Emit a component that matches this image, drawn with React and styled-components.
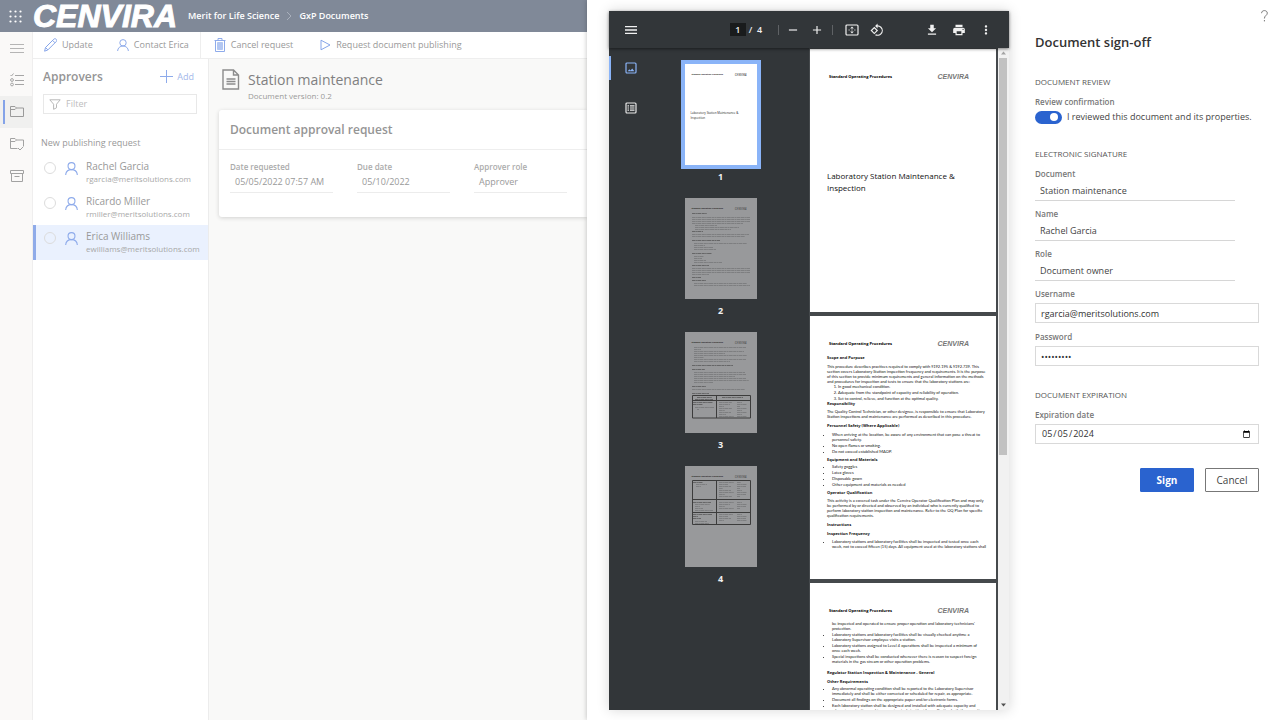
import React, { useState } from "react";
import styled, { createGlobalStyle } from "styled-components";
import {
  MdAdd,
  MdFileDownload,
  MdMenu,
  MdMoreVert,
  MdPrint,
  MdRemove,
  MdRotate90DegreesCcw,
} from "react-icons/md";

const approvers = [
  { id: "rgarcia", name: "Rachel Garcia", email: "rgarcia@meritsolutions.com" },
  { id: "rmiller", name: "Ricardo Miller", email: "rmiller@meritsolutions.com" },
  { id: "ewilliams", name: "Erica Williams", email: "ewilliams@meritsolutions.com", selected: true },
];

const scope = [
  "This procedure describes practices required to comply with §192.195 & §192.739. This",
  "section covers Laboratory Station inspection frequency and requirements. It is the purpose",
  "of this section to provide minimum requirements and general information on the methods",
  "and procedures for inspection and tests to ensure that the laboratory stations are:",
];

const responsibility = [
  "The Quality Control Technician, or other designee, is responsible to ensure that Laboratory",
  "Station inspections and maintenance are performed as described in this procedure.",
];

const qualification = [
  "This activity is a covered task under the Cenvira Operator Qualification Plan and may only",
  "be performed by or directed and observed by an individual who is currently qualified to",
  "perform laboratory station inspection and maintenance. Refer to the OQ Plan for specific",
  "qualification requirements.",
];

// [y, x1, x2, strong] strokes of the small page previews
const previewTwo = [
  [16, 7, 22, 1], [20, 7, 65], [22, 7, 65], [24, 7, 65], [26, 7, 58],
  [28, 10, 32], [30, 10, 54], [32, 10, 46], [34, 7, 18, 1], [37, 7, 64], [39, 7, 60],
  [43, 7, 35, 1], [46, 9, 62], [48, 9, 20], [50, 9, 28], [52, 9, 31],
  [56, 7, 27, 1], [59, 9, 19], [61, 9, 17], [63, 9, 21], [65, 9, 37],
  [68, 7, 24, 1], [71, 7, 65], [73, 7, 65], [75, 7, 65], [77, 7, 24],
  [80, 7, 16, 1], [83, 7, 21, 1], [86, 9, 62], [88, 9, 65],
];
const previewThree = [
  [16, 9, 61], [18, 9, 16], [20, 9, 59], [22, 9, 40], [24, 9, 62], [26, 9, 19],
  [28, 9, 61], [30, 9, 45], [34, 7, 48, 1], [38, 7, 20, 1], [41, 9, 60], [43, 9, 61],
  [45, 9, 50], [47, 9, 61], [49, 9, 64], [51, 9, 28], [55, 7, 21, 1], [58, 7, 60], [62, 7, 24, 1],
  [66, 12, 27, 1], [68, 10, 28, 1], [66, 37, 58, 1],
  [71, 8, 28, 1], [73, 8, 18, 1], [76, 10, 29], [78, 12, 14],
  [71, 34, 47], [73, 34, 45], [75, 34, 39], [77, 34, 47], [79, 34, 40], [81, 34, 46], [83, 34, 41], [85, 34, 49],
  [71, 52, 57], [73, 52, 62], [75, 52, 55], [77, 52, 62], [79, 52, 57], [81, 52, 62], [83, 52, 57], [85, 52, 62],
];
const previewFour = [
  [17, 8, 18, 1], [19, 11, 22], [21, 11, 16], [37, 8, 26, 1], [39, 10, 25], [41, 10, 15], [43, 10, 18], [45, 10, 28],
  [49, 8, 27, 1], [51, 8, 13, 1], [53, 8, 16, 1], [56, 10, 22], [58, 10, 24],
  [17, 34, 49], [19, 34, 43], [21, 34, 46], [23, 34, 38], [25, 34, 46], [27, 34, 49], [29, 34, 40], [31, 34, 47],
  [37, 34, 49], [39, 34, 45], [41, 34, 40], [43, 34, 49], [49, 34, 48], [51, 34, 43], [53, 34, 46], [55, 34, 39],
  [17, 52, 56], [19, 52, 62], [21, 52, 61], [23, 52, 55], [25, 52, 57], [27, 52, 62], [29, 52, 61], [31, 52, 55],
  [37, 52, 57], [39, 52, 62], [41, 52, 61], [43, 52, 55], [49, 52, 57], [51, 52, 62], [53, 52, 61], [55, 52, 62],
];

const thumbnails = [
  { page: 2, lines: previewTwo },
  { page: 3, lines: previewThree, table: "M7.5 64.5h58v22.5h-58zM31.5 64.5v22.5M7.5 69.5h58" },
  { page: 4, lines: previewFour, table: "M7.5 15.5h58v44h-58zM31.5 15.5v44M7.5 34.5h58M7.5 47.5h58" },
];

export default function App() {
  const [reviewed, setReviewed] = useState(true);

  return (
    <>
      <GlobalStyle />
      <Shell>
        <Workspace>
          <TopBar>
            <WaffleButton aria-label="Apps">
              <WaffleIcon />
            </WaffleButton>
            <Logo>CENVIRA</Logo>
            <Crumbs>
              <Crumb href="#life-science">Merit for Life Science</Crumb>
              <ChevronIcon />
              <Crumb href="#gxp">GxP Documents</Crumb>
            </Crumbs>
          </TopBar>
          <Body>
            <Rail>
              <RailButton aria-label="Menu">
                <BarsIcon />
              </RailButton>
              <RailButton aria-label="Tasks">
                <TasksIcon />
              </RailButton>
              <RailButton aria-label="Documents" $active>
                <FolderIcon />
              </RailButton>
              <RailButton aria-label="Reviewed">
                <FolderCheckIcon />
              </RailButton>
              <RailButton aria-label="Archive">
                <ArchiveIcon />
              </RailButton>
            </Rail>
            <Main>
              <Commands>
                <CommandGroup>
                  <Command>
                    <PencilIcon />
                    Update
                  </Command>
                  <Command>
                    <PersonIcon size={12} />
                    Contact Erica
                  </Command>
                </CommandGroup>
                <CommandGroup>
                  <Command>
                    <TrashIcon />
                    Cancel request
                  </Command>
                  <Command>
                    <PlayIcon />
                    Request document publishing
                  </Command>
                </CommandGroup>
              </Commands>
              <Columns>
                <Approvers>
                  <ApproversHead>
                    <PanelTitle>Approvers</PanelTitle>
                    <AddButton>
                      <PlusIcon />
                      Add
                    </AddButton>
                  </ApproversHead>
                  <Filter>
                    <FunnelIcon />
                    <FilterInput aria-label="Filter approvers" placeholder="Filter" />
                  </Filter>
                  <GroupLabel>New publishing request</GroupLabel>
                  <ApproverList>
                    {approvers.map((a) => (
                      <ApproverRow key={a.id} $selected={a.selected}>
                        <Radio type="radio" name="approver" value={a.id} />
                        <PersonIcon size={13} />
                        <ApproverText>
                          <ApproverName>{a.name}</ApproverName>
                          <ApproverEmail>{a.email}</ApproverEmail>
                        </ApproverText>
                      </ApproverRow>
                    ))}
                  </ApproverList>
                </Approvers>
                <Detail>
                  <DetailHead>
                    <DocumentIcon />
                    <div>
                      <DetailTitle>Station maintenance</DetailTitle>
                      <DetailVersion>Document version: 0.2</DetailVersion>
                    </div>
                  </DetailHead>
                  <Card>
                    <CardTitle>Document approval request</CardTitle>
                    <CardFields>
                      <CardField>
                        <CardLabel>Date requested</CardLabel>
                        <CardValue>05/05/2022 07:57 AM</CardValue>
                      </CardField>
                      <CardField>
                        <CardLabel>Due date</CardLabel>
                        <CardValue>05/10/2022</CardValue>
                      </CardField>
                      <CardField>
                        <CardLabel>Approver role</CardLabel>
                        <CardValue>Approver</CardValue>
                      </CardField>
                    </CardFields>
                  </Card>
                </Detail>
              </Columns>
            </Main>
          </Body>
        </Workspace>

        <SignOff>
          <Viewer>
            <ViewerBar>
              <ViewerButton aria-label="Toggle sidebar">
                <MdMenu size={16} />
              </ViewerButton>
              <ViewerTools>
                <PageInput aria-label="Page number" defaultValue="1" />
                <PageCount>/&nbsp; 4</PageCount>
                <ToolDivider />
                <ViewerButton aria-label="Zoom out">
                  <MdRemove size={14} />
                </ViewerButton>
                <ViewerButton aria-label="Zoom in">
                  <MdAdd size={14} />
                </ViewerButton>
                <ToolDivider />
                <ViewTools>
                  <ViewerButton aria-label="Fit to page">
                    <FitIcon />
                  </ViewerButton>
                  <ViewerButton aria-label="Rotate">
                    <MdRotate90DegreesCcw size={14} />
                  </ViewerButton>
                </ViewTools>
              </ViewerTools>
              <ViewerActions>
                <ViewerButton aria-label="Download">
                  <MdFileDownload size={14} />
                </ViewerButton>
                <ViewerButton aria-label="Print">
                  <MdPrint size={14} />
                </ViewerButton>
                <ViewerButton aria-label="More">
                  <MdMoreVert size={14} />
                </ViewerButton>
              </ViewerActions>
            </ViewerBar>
            <ViewerBody>
              <ViewerTabs>
                <ViewerTab aria-label="Thumbnails" $active>
                  <ImageIcon />
                </ViewerTab>
                <ViewerTab aria-label="Outline">
                  <OutlineIcon />
                </ViewerTab>
              </ViewerTabs>
              <Thumbs>
                <Thumb>
                  <ThumbPage $current>
                    <ThumbHeader />
                    <ThumbTitle>
                      Laboratory Station Maintenance &
                      <br />
                      Inspection
                    </ThumbTitle>
                  </ThumbPage>
                  <ThumbNumber>1</ThumbNumber>
                </Thumb>
                {thumbnails.map((t) => (
                  <Thumb key={t.page}>
                    <ThumbPage>
                      <ThumbHeader />
                      <Preview lines={t.lines} table={t.table} />
                    </ThumbPage>
                    <ThumbNumber>{t.page}</ThumbNumber>
                  </Thumb>
                ))}
              </Thumbs>
              <Pages>
                <Page>
                  <PageHeader />
                  <CoverTitle>
                    Laboratory Station Maintenance &
                    <br />
                    Inspection
                  </CoverTitle>
                </Page>
                <Page>
                  <PageHeader />
                  <DocHeading $top={9}>Scope and Purpose</DocHeading>
                  <Paragraph $top={4} lines={scope} />
                  <DocList as="ol" $top={0} $indent={11}>
                    <li>In good mechanical condition.</li>
                    <li>Adequate from the standpoint of capacity and reliability of operation.</li>
                    <li>Set to control, relieve, and function at the optimal quality.</li>
                  </DocList>
                  <DocHeading $top={0}>Responsibility</DocHeading>
                  <Paragraph $top={3} lines={responsibility} />
                  <DocHeading $top={4}>Personnel Safety (Where Applicable)</DocHeading>
                  <DocList $top={4}>
                    <li>
                      When arriving at the location, be aware of any environment that can pose a threat to
                      <br />
                      personnel safety.
                    </li>
                    <li>No open flames or smoking.</li>
                    <li>Do not exceed established MAOP.</li>
                  </DocList>
                  <DocHeading $top={3}>Equipment and Materials</DocHeading>
                  <DocList $top={2}>
                    <li>Safety goggles</li>
                    <li>Latex gloves</li>
                    <li>Disposable gown</li>
                    <li>Other equipment and materials as needed</li>
                  </DocList>
                  <DocHeading $top={3}>Operator Qualification</DocHeading>
                  <Paragraph $top={3} lines={qualification} />
                  <DocHeading $top={4}>Instructions</DocHeading>
                  <DocHeading $top={4} as="h4">
                    Inspection Frequency
                  </DocHeading>
                  <DocList $top={3}>
                    <li>
                      Laboratory stations and laboratory facilities shall be inspected and tested once each
                      <br />
                      week, not to exceed fifteen (15) days. All equipment used at the laboratory stations shall
                    </li>
                  </DocList>
                </Page>
                <Page>
                  <PageHeader />
                  <DocList $top={8}>
                    <Continued>
                      be inspected and operated to ensure proper operation and laboratory technicians'
                      <br />
                      protection.
                    </Continued>
                    <li>
                      Laboratory stations and laboratory facilities shall be visually checked anytime a
                      <br />
                      Laboratory Supervisor employee visits a station.
                    </li>
                    <li>
                      Laboratory stations assigned to Level 4 operations shall be inspected a minimum of
                      <br />
                      once each week.
                    </li>
                    <li>
                      Special inspections shall be conducted whenever there is reason to suspect foreign
                      <br />
                      materials in the gas stream or other operation problems.
                    </li>
                  </DocList>
                  <DocHeading $top={6}>Regulator Station Inspection & Maintenance - General</DocHeading>
                  <DocHeading $top={4} as="h4">
                    Other Requirements
                  </DocHeading>
                  <DocList $top={2}>
                    <li>
                      Any abnormal operating condition shall be reported to the Laboratory Supervisor
                      <br />
                      immediately and shall be either corrected or scheduled for repair, as appropriate.
                    </li>
                    <li>Document all findings on the appropriate paper and/or electronic forms.</li>
                    <li>
                      Each laboratory station shall be designed and installed with adequate capacity and
                      <br />
                      adequate protection, and to prevent a single incident from affecting both the operating
                    </li>
                  </DocList>
                </Page>
              </Pages>
              <ScrollTrack>
                <ScrollArrow viewBox="0 0 11 10">
                  <path d="M5.5 3.5l2.5 3h-5z" fill="#a3a3a3" />
                </ScrollArrow>
                <ScrollThumb />
                <ScrollArrow viewBox="0 0 11 10">
                  <path d="M3 3.5h5l-2.5 3z" fill="#505050" />
                </ScrollArrow>
              </ScrollTrack>
            </ViewerBody>
          </Viewer>

          <FormSide>
            <HelpRow>
              <HelpButton aria-label="Help">
                <HelpIcon />
              </HelpButton>
            </HelpRow>
            <Form onSubmit={(e) => e.preventDefault()}>
              <FormTitle>Document sign-off</FormTitle>
              <Section>
                <Legend>Document review</Legend>
                <Label htmlFor="reviewed">Review confirmation</Label>
                <ToggleRow>
                  <Toggle
                    id="reviewed"
                    type="checkbox"
                    role="switch"
                    checked={reviewed}
                    onChange={(e) => setReviewed(e.target.checked)}
                  />
                  <span>I reviewed this document and its properties.</span>
                </ToggleRow>
              </Section>
              <Section>
                <Legend>Electronic signature</Legend>
                <Label htmlFor="document">Document</Label>
                <ReadOnly id="document" readOnly value="Station maintenance" />
                <Label htmlFor="name">Name</Label>
                <ReadOnly id="name" readOnly value="Rachel Garcia" />
                <Label htmlFor="role">Role</Label>
                <ReadOnly id="role" readOnly value="Document owner" />
                <Label htmlFor="username">Username</Label>
                <Input id="username" defaultValue="rgarcia@meritsolutions.com" />
                <Label htmlFor="password">Password</Label>
                <Input id="password" type="password" defaultValue="signature" />
              </Section>
              <Section>
                <Legend>Document expiration</Legend>
                <Label htmlFor="expires">Expiration date</Label>
                <Input id="expires" type="date" defaultValue="2024-05-05" />
              </Section>
              <Buttons>
                <Button type="submit" $primary>
                  Sign
                </Button>
                <Button type="button">Cancel</Button>
              </Buttons>
            </Form>
          </FormSide>
        </SignOff>
      </Shell>
    </>
  );
}

function ThumbHeader() {
  return (
    <ThumbHead>
      <b>Standard Operating Procedures</b>
      <ThumbBrand>CENVIRA</ThumbBrand>
    </ThumbHead>
  );
}

function Preview({ lines, table }) {
  return (
    <PreviewSvg viewBox="0 14 72 76">
      {lines.map(([y, x1, x2, strong], i) => (
        <path
          key={i}
          d={`M${x1} ${y + 0.5}H${x2}`}
          stroke="#222"
          strokeDasharray="3 .4 1.5 .4 4 .5"
          opacity={strong ? 0.42 : 0.22}
        />
      ))}
      {table && <path d={table} fill="none" stroke="#3c3c3c" />}
    </PreviewSvg>
  );
}

function PageHeader() {
  return (
    <PageHead>
      <b>Standard Operating Procedures</b>
      <PageBrand>CENVIRA</PageBrand>
    </PageHead>
  );
}

function Paragraph({ lines, $top }) {
  return (
    <DocParagraph $top={$top}>
      {lines.map((line, i) => (
        <DocLine key={line} $last={i === lines.length - 1}>
          {line}
        </DocLine>
      ))}
    </DocParagraph>
  );
}

/* icons */

const WaffleIcon = () => (
  <svg width="13" height="13" viewBox="0 0 13 13" fill="#fff">
    {[1.5, 6.5, 11.5].map((y) => [1.5, 6.5, 11.5].map((x) => <circle key={x + "-" + y} cx={x} cy={y} r="1.1" />))}
  </svg>
);
const ChevronIcon = () => (
  <svg width="6" height="10" viewBox="0 0 6 10" fill="none" stroke="#a9b0bc">
    <path d="M1 1l4 4-4 4" />
  </svg>
);
const BarsIcon = () => (
  <svg width="14" height="14" viewBox="0 0 14 14" fill="none" stroke="#b5b5b5">
    <path d="M0 3.5h14M0 7.5h14M0 11.5h14" />
  </svg>
);
const TasksIcon = () => (
  <svg width="14" height="14" viewBox="0 0 14 14" fill="none" stroke="#a5a5a5">
    <path d="M5 2.5h9M5 7.5h9M5 11.5h9M.5 2l1 1L3.5 .5" />
    <circle cx="2" cy="7" r="1.4" />
    <circle cx="2" cy="11.5" r="1.4" />
  </svg>
);
const FolderIcon = () => (
  <svg width="14" height="14" viewBox="0 0 14 14" fill="none" stroke="#9a9a9a">
    <path d="M.5 11.5v-10h4.5l1.5 1.5h7v8.5zM.5 4.5h4.5l1.5-1.5" />
  </svg>
);
const FolderCheckIcon = () => (
  <svg width="14" height="14" viewBox="0 0 14 14" fill="none" stroke="#a2a2a2">
    <path d="M7.5 11.5h-7v-10h4.5l1.5 1.5h7v6M.5 4.5h4.5l1.5-1.5M8 11l2 2 3.5-3.5" />
  </svg>
);
const ArchiveIcon = () => (
  <svg width="14" height="14" viewBox="0 0 14 14" fill="none" stroke="#a2a2a2">
    <path d="M.5 1.5h13v3h-13zM1.5 4.5v8h11v-8M4.5 7.5h5" />
  </svg>
);
const PencilIcon = () => (
  <svg width="13" height="14" viewBox="0 0 13 14" fill="none" stroke="#86a5e9">
    <path d="M.6 13.2l.9-3.7 8.3-8.3c1.6-1.5 3.9.8 2.4 2.4l-8.3 8.3zM1.5 9.5l2.4 2.4M8.6 2.4l2.4 2.4" />
  </svg>
);
const PersonIcon = ({ size }) => (
  <svg width={size} height={size} viewBox="0 0 12 12" fill="none" stroke="#8eabeb">
    <circle cx="6" cy="3.8" r="3.2" />
    <path d="M.6 12c.2-3 2.4-5 5.4-5s5.2 2 5.4 5" />
  </svg>
);
const TrashIcon = () => (
  <svg width="12" height="14" viewBox="0 0 12 14" fill="none" stroke="#8eabeb">
    <path d="M.5 2.5h11M4 2.5v-2h4v2M1.5 2.5v11h9v-11" />
    <path d="M3.5 4.5h5v7h-5z" fill="#b3c7f2" stroke="#b3c7f2" />
  </svg>
);
const PlayIcon = () => (
  <svg width="11" height="12" viewBox="0 0 11 12" fill="none" stroke="#86a5e9">
    <path d="M1 1.2v9.600l9-4.800z" />
  </svg>
);
const PlusIcon = () => (
  <svg width="13" height="13" viewBox="0 0 13 13" fill="none" stroke="#8eabeb">
    <path d="M6.5 0v13M0 6.5h13" />
  </svg>
);
const FunnelIcon = () => (
  <svg width="12" height="11" viewBox="0 0 12 11" fill="none" stroke="#b8b8b8">
    <path d="M.8.8h10.4L7.5 5.2v3.6L4.6 10.3V5.2z" />
  </svg>
);
const DocumentIcon = () => (
  <svg width="18" height="21" viewBox="0 0 18 21" fill="none" stroke="#8c8c8c" strokeWidth="1.4">
    <path d="M1 1h10.5L16.5 6v14H1zM11.5 1v5h5M4.5 10h9M4.5 12.5h9M4.5 15h9" />
  </svg>
);
const FitIcon = () => (
  <svg width="14" height="14" viewBox="0 0 14 14" fill="none" stroke="#f1f1f1" strokeWidth="1.2">
    <rect x="1" y="2" width="12" height="10" rx="1" />
    <path
      d="M7 3.6l1.8 2H5.2zM7 10.4l1.8-2H5.2zM3.6 6.5h1v1h-1zM6.5 6.5h1v1h-1zM9.4 6.5h1v1h-1z"
      fill="#f1f1f1"
      stroke="none"
    />
  </svg>
);
const ImageIcon = () => (
  <svg width="12" height="12" viewBox="0 0 12 12" fill="none" stroke="#8ab4f8" strokeWidth="1.2">
    <rect x="1" y="1" width="10" height="10" rx="1" />
    <path d="M2.7 9.3l1.6-2 1.2 1.3L7.2 6.5l2.2 2.8z" fill="#8ab4f8" stroke="none" />
  </svg>
);
const OutlineIcon = () => (
  <svg width="12" height="12" viewBox="0 0 12 12" fill="none" stroke="#e8e8e8" strokeWidth="1.2">
    <rect x="1" y="1" width="10" height="10" rx="1" />
    <path d="M2.5 3.8h1.5M5 3.8h4.5M2.5 6h1.5M5 6h4.5M2.5 8.2h1.5M5 8.2h4.5" />
  </svg>
);
const HelpIcon = () => (
  <svg width="7" height="12" viewBox="0 0 7 12" fill="none" stroke="#777">
    <path d="M.6 3.2C.6 1.5 1.8.6 3.4.6s2.9 1 2.9 2.5c0 2.3-2.9 2.5-2.9 5.4M3.4 10v1.4" />
  </svg>
);

const GlobalStyle = createGlobalStyle`
  * {
    box-sizing: border-box;
  }
  body {
    margin: 0;
    font-family: "Open Sans", sans-serif;
    font-size: 9px;
    line-height: 14px;
    font-weight: 500;
    color: #444;
    background: #fff;
  }
  button, input {
    font: inherit;
    color: inherit;
  }
  button {
    border: none;
    background: none;
    padding: 0;
    cursor: pointer;
  }
  h1, h2, h3, h4, p, ul, ol {
    margin: 0;
    padding: 0;
  }
  svg {
    display: block;
    flex-shrink: 0;
  }
`;

const Shell = styled.div`
  display: grid;
  grid-template-columns: minmax(0, 587fr) minmax(0, 693fr);
  grid-template-rows: minmax(0, 1fr);
  height: 100vh;
`;

const Workspace = styled.div`
  display: flex;
  flex-direction: column;
  min-height: 0;
  white-space: nowrap;
  color: #999;
`;
const TopBar = styled.header`
  display: flex;
  align-items: center;
  height: 32px;
  padding-left: 9px;
  background: #808998;
  color: #fff;
`;
const WaffleButton = styled.button`
  padding-right: 11px;
`;
const Logo = styled.span`
  font-family: "Liberation Sans", sans-serif;
  font-size: 32px;
  line-height: 32px;
  font-weight: bold;
  font-style: italic;
  -webkit-text-stroke: 1px #fff;
`;
const Crumbs = styled.nav`
  display: flex;
  align-items: center;
  gap: 7px;
  padding-left: 11px;
`;
const Crumb = styled.a`
  color: #fff;
  font-weight: 600;
  text-decoration: none;
`;

const Body = styled.div`
  display: flex;
  flex: 1;
  min-height: 0;
`;
const Rail = styled.nav`
  display: flex;
  flex-direction: column;
  width: 33px;
  background: #faf9f8;
  border-right: 1px solid #efeeee;
`;
const RailButton = styled.button`
  display: flex;
  align-items: center;
  height: 32px;
  padding-left: ${(p) => (p.$active ? "3px" : "10px")};
  background: ${(p) => (p.$active ? "#f0f0ef" : "none")};

  ${(p) =>
    p.$active &&
    `
    &:before {
      content: "";
      width: 2px;
      height: 24px;
      margin-right: 5px;
      background: #84a3e8;
    }
  `}
`;
const Main = styled.main`
  display: flex;
  flex-direction: column;
  flex: 1;
  min-width: 0;
`;
const Commands = styled.div`
  display: flex;
  height: 27px;
  border-bottom: 1px solid #eeeeee;
`;
const CommandGroup = styled.div`
  display: flex;
  align-items: center;
  gap: 24px;
  padding: 0 11px;

  & + & {
    gap: 27px;
    padding-left: 13px;
    border-left: 1px solid #eeeeee;
  }
`;
const Command = styled.button`
  display: flex;
  align-items: center;
  gap: 5px;
`;
const Columns = styled.div`
  display: flex;
  flex: 1;
  min-height: 0;
`;

const Approvers = styled.section`
  width: 176px;
  flex-shrink: 0;
  border-right: 1px solid #ececec;
`;
const ApproversHead = styled.div`
  display: flex;
  align-items: center;
  justify-content: space-between;
  height: 35px;
  padding: 0 14px 0 10px;
`;
const PanelTitle = styled.h2`
  font-size: 12px;
  font-weight: 600;
  color: #959595;
`;
const AddButton = styled.button`
  display: flex;
  align-items: center;
  gap: 4px;
  color: #a3b8ea;
`;
const Filter = styled.label`
  display: flex;
  align-items: center;
  gap: 5px;
  height: 20px;
  margin: 0 11px 0 10px;
  padding-left: 5px;
  border: 1px solid #e8e8e8;
`;
const FilterInput = styled.input`
  min-width: 0;
  flex: 1;
  padding: 0;
  border: none;
  outline: none;
  background: none;

  &::placeholder {
    color: #bdbdbd;
  }
`;
const GroupLabel = styled.h3`
  margin: 21px 0 5px 8px;
  font-size: 9px;
  line-height: 15px;
  font-weight: 500;
`;
const ApproverList = styled.div`
  display: flex;
  flex-direction: column;
`;
const ApproverRow = styled.label`
  display: flex;
  align-items: flex-start;
  height: 35px;
  padding: 7px 0 0 8px;
  border-left: 3px solid ${(p) => (p.$selected ? "#8fabe9" : "transparent")};
  background: ${(p) => (p.$selected ? "#eaf1fe" : "none")};
`;
const Radio = styled.input`
  appearance: none;
  width: 12px;
  height: 12px;
  margin: 0 9px 0 0;
  border: 1px solid #dcdcdc;
  border-radius: 50%;
`;
const ApproverText = styled.span`
  display: flex;
  flex-direction: column;
  margin: -2px 0 0 8px;
`;
const ApproverName = styled.span`
  font-size: 10px;
  line-height: 13px;
`;
const ApproverEmail = styled.span`
  font-size: 8px;
  line-height: 11px;
  font-weight: 400;
  color: #a8a8a8;
`;

const Detail = styled.section`
  flex: 1;
  min-width: 0;
  background: #f9f9f8;
`;
const DetailHead = styled.div`
  display: flex;
  align-items: flex-start;
  gap: 8px;
  padding: 10px 0 8px 13px;
`;
const DetailTitle = styled.h1`
  font-size: 14px;
  line-height: 21px;
  font-weight: 500;
  color: #808080;
`;
const DetailVersion = styled.p`
  font-size: 8px;
  line-height: 12px;
  font-weight: 400;
`;
const Card = styled.article`
  height: 107px;
  margin-left: 10px;
  border-radius: 3px 0 0 3px;
  background: #fff;
  box-shadow: 0 1px 4px rgba(0, 0, 0, 0.16);
`;
const CardTitle = styled.h2`
  height: 40px;
  padding-left: 11px;
  border-bottom: 1px solid #eeeeee;
  font-size: 12px;
  line-height: 39px;
  font-weight: 600;
  color: #959595;
`;
const CardFields = styled.div`
  display: flex;
  gap: 24px;
  padding: 11px;
`;
const CardField = styled.div`
  width: 93px;

  &:first-child {
    width: 103px;
  }
`;
const CardLabel = styled.div`
  font-size: 8px;
  line-height: 12px;
  font-weight: 600;
  color: #ababab;
`;
const CardValue = styled.div`
  padding: 2px 0 3px 5px;
  border-bottom: 1px solid #ececec;
`;

const SignOff = styled.aside`
  display: flex;
  position: relative;
  min-width: 0;
  background: #fff;
  box-shadow: 0 0 5px rgba(0, 0, 0, 0.25);
`;
const Viewer = styled.section`
  display: flex;
  flex-direction: column;
  flex: 1;
  min-width: 0;
  margin: 11px 0 10px 22px;
  background: #323639;
  color: #f1f1f1;
  box-shadow: 0 0 12px rgba(0, 0, 0, 0.16);
`;
const ViewerBar = styled.div`
  display: grid;
  grid-template-columns: 1fr auto 1fr;
  align-items: center;
  position: relative;
  height: 37px;
  flex-shrink: 0;
  padding: 0 16px 0 14px;
  box-shadow: 0 1px 3px rgba(0, 0, 0, 0.5);
`;
const ViewerButton = styled.button`
  color: #f1f1f1;
`;
const ViewerTools = styled.div`
  display: flex;
  align-items: center;
  gap: 10px;
  margin-right: 2px;
`;
const ViewTools = styled.div`
  display: flex;
  gap: 11px;
  margin-left: 5px;
`;
const PageInput = styled.input`
  width: 16px;
  height: 13px;
  padding: 0;
  border: none;
  background: #191b1c;
  font-weight: 600;
  text-align: center;
`;
const PageCount = styled.span`
  margin: 0 8px 0 -7px;
  font-weight: 600;
`;
const ToolDivider = styled.span`
  width: 1px;
  height: 10px;
  margin: 0 -3px 0 -2px;
  background: #5f6265;
`;
const ViewerActions = styled.div`
  display: flex;
  justify-content: flex-end;
  gap: 13px;
`;
const ViewerBody = styled.div`
  display: flex;
  flex: 1;
  min-height: 0;
`;
const ViewerTabs = styled.div`
  display: flex;
  flex-direction: column;
  gap: 16px;
  width: 44px;
  padding-top: 8px;
`;
const ViewerTab = styled.button`
  display: flex;
  align-items: center;
  justify-content: center;
  height: 24px;
  padding-right: 2px;
  border-left: 2px solid ${(p) => (p.$active ? "#8ab4f8" : "transparent")};
`;
const Thumbs = styled.div`
  display: flex;
  flex-direction: column;
  align-items: center;
  gap: 13px;
  width: 156px;
  padding: 12px 21px 0 0;
`;
const Thumb = styled.div`
  display: flex;
  flex-direction: column;
  align-items: center;
  width: 72px;
`;
const ThumbPage = styled.div`
  width: 72px;
  height: 101px;
  margin-top: ${(p) => (p.$current ? "4px" : "0")};
  padding-top: 9px;
  background: ${(p) => (p.$current ? "#fff" : "#98999b")};
  outline: ${(p) => (p.$current ? "4px solid #8ab4f8" : "none")};
  color: #222;
  white-space: nowrap;
`;
const ThumbHead = styled.div`
  display: flex;
  align-items: center;
  justify-content: space-between;
  padding: 0 10px 0 7px;
  font-size: 2px;
  line-height: 4px;
`;
const ThumbBrand = styled.i`
  font-size: 3px;
  font-weight: 600;
  color: #555;
`;
const ThumbTitle = styled.p`
  padding: 34px 0 0 6px;
  font-size: 3px;
  line-height: 5px;
`;
const PreviewSvg = styled.svg`
  width: 72px;
  height: 76px;
`;
const ThumbNumber = styled.span`
  padding-top: 4px;
  line-height: 16px;
  font-weight: 700;
`;

const Pages = styled.div`
  display: flex;
  flex-direction: column;
  flex: 1;
  gap: 4px;
  min-width: 0;
  padding: 1px 2px 0 1px;
  overflow: hidden;
  background: #45494c;
`;
const Page = styled.article`
  flex-shrink: 0;
  height: 263px;
  padding: 24px 17px 0 17px;
  background: #fff;
  font-family: Lato, sans-serif;
  font-size: 4px;
  line-height: 5px;
  font-weight: 400;
  color: #111;
  white-space: nowrap;
`;
const PageHead = styled.div`
  display: flex;
  align-items: center;
  justify-content: space-between;
  height: 6px;
  padding: 0 10px 0 2px;
  font-family: "Open Sans", sans-serif;
  color: #000;
`;
const PageBrand = styled.i`
  font-family: "Liberation Sans", sans-serif;
  font-size: 7px;
  font-weight: 700;
  color: #777;
`;
const CoverTitle = styled.h2`
  margin-top: 91px;
  font-family: "Open Sans", sans-serif;
  font-size: 8px;
  line-height: 12px;
  font-weight: 500;
`;
const DocHeading = styled.h3`
  margin-top: ${(p) => p.$top}px;
  font-family: "Open Sans", sans-serif;
  font-size: 4px;
  line-height: 5px;
  font-weight: 700;
`;
const DocParagraph = styled.p`
  margin-top: ${(p) => p.$top}px;
`;
const DocLine = styled.span`
  display: block;
  text-align-last: ${(p) => (p.$last ? "left" : "justify")};
`;
const DocList = styled.ul`
  display: flex;
  flex-direction: column;
  gap: 1px;
  margin-top: ${(p) => p.$top}px;
  padding-left: ${(p) => p.$indent || 5}px;
`;
const Continued = styled.li`
  list-style: none;
`;

const ScrollTrack = styled.div`
  display: flex;
  flex-direction: column;
  width: 11px;
  background: #f1f1f1;
`;
const ScrollArrow = styled.svg`
  width: 11px;
  height: 10px;
`;
const ScrollThumb = styled.div`
  flex: 0 0 60%;
  margin: 0 2px 0 1px;
  background: #c1c1c1;

  & + svg {
    margin-top: auto;
  }
`;

const FormSide = styled.div`
  width: 271px;
  padding: 10px 12px 0 26px;
`;
const HelpRow = styled.div`
  display: flex;
  justify-content: flex-end;
`;
const HelpButton = styled.button`
  height: 12px;
`;
const Form = styled.form`
  width: 224px;
  padding-top: 10px;
`;
const FormTitle = styled.h1`
  font-size: 13px;
  line-height: 21px;
  font-weight: 600;
  color: #333;
`;
const Section = styled.section`
  display: flex;
  flex-direction: column;
  margin-top: 22px;
`;
const Legend = styled.h2`
  margin-bottom: 6px;
  font-size: 8px;
  line-height: 14px;
  font-weight: 500;
  text-transform: uppercase;
  color: #555;
`;
const Label = styled.label`
  font-size: 8px;
  line-height: 14px;
  font-weight: 600;
  color: #777;
`;
const ToggleRow = styled.div`
  display: flex;
  align-items: center;
  gap: 5px;
  height: 16px;
  white-space: nowrap;
`;
const Toggle = styled.input`
  appearance: none;
  display: flex;
  flex-shrink: 0;
  align-items: center;
  justify-content: ${(p) => (p.checked ? "flex-end" : "flex-start")};
  width: 27px;
  height: 13px;
  margin: 0;
  padding: 0 4px;
  border-radius: 7px;
  background: ${(p) => (p.checked ? "#2a63cf" : "#8a8a8a")};
  cursor: pointer;

  &:before {
    content: "";
    width: 8px;
    height: 8px;
    border-radius: 50%;
    background: #fff;
  }
`;
const ReadOnly = styled.input`
  width: 200px;
  height: 20px;
  margin-bottom: 6px;
  padding: 0 5px;
  border: none;
  border-bottom: 1px solid #d6d6d6;
  outline: none;
`;
const Input = styled.input`
  width: 100%;
  height: 20px;
  margin: 2px 0 7px;
  padding: 0 5px;
  border: 1px solid #d9d9d9;
  background: #fff;
  color: #333;

  &:last-child {
    margin-bottom: 0;
  }
`;
const Buttons = styled.div`
  display: flex;
  justify-content: flex-end;
  gap: 11px;
  margin-top: 24px;
`;
const Button = styled.button`
  width: 54px;
  height: 24px;
  border: 1px solid ${(p) => (p.$primary ? "#2a63cf" : "#777")};
  border-radius: 1px;
  background: ${(p) => (p.$primary ? "#2a63cf" : "#fff")};
  color: ${(p) => (p.$primary ? "#fff" : "#444")};
  font-size: 10px;
  font-weight: ${(p) => (p.$primary ? 700 : 500)};
`;
